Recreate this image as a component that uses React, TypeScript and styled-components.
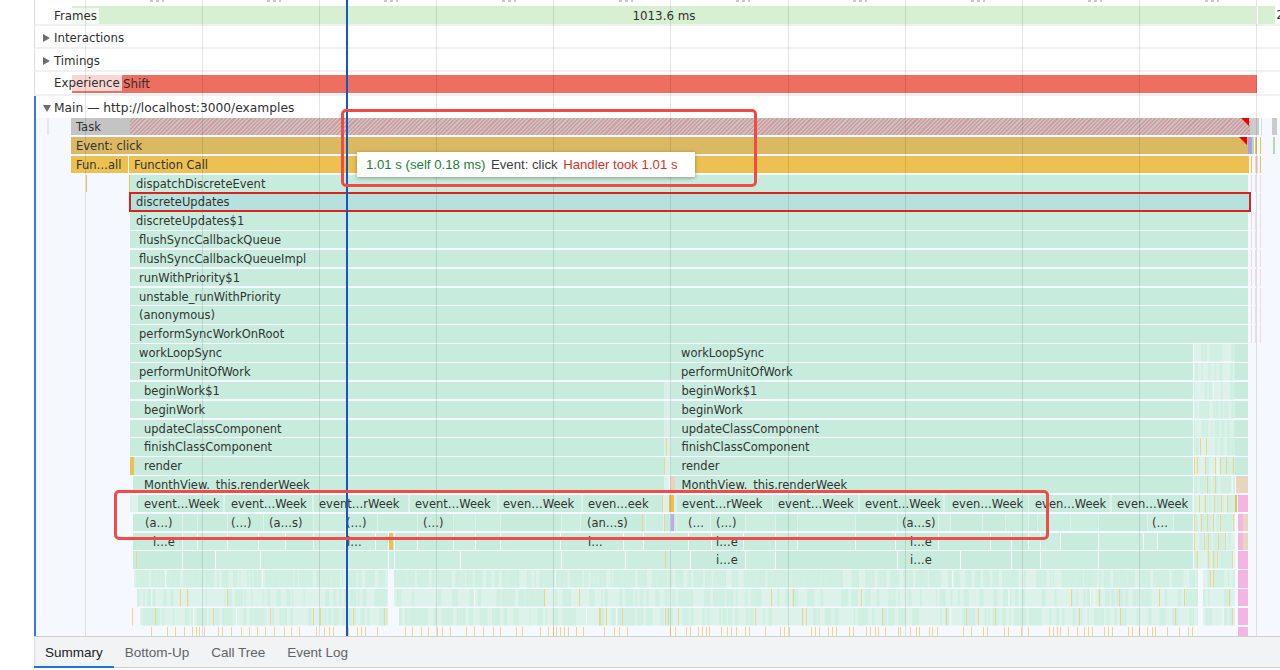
import styled, { createGlobalStyle } from 'styled-components'

const ORIGIN = 34
const ROW_PITCH = 18.85

const GlobalStyle = createGlobalStyle`
  html, body {
    margin: 0;
    padding: 0;
    background: #fff;
    overflow: hidden;
  }
`

const Page = styled.div`
  position: relative;
  width: 1280px;
  height: 670px;
  overflow: hidden;
  padding-left: ${ORIGIN}px;
  box-sizing: border-box;
  background: #fff;
  font-family: 'DejaVu Sans', sans-serif;
  font-size: 11.5px;
  color: #303030;
`

const Ruler = styled.div`
  height: 5px;
  box-sizing: border-box;
  border-left: 1px solid #ddd;
  padding: 0 61px 0 115px;
  display: flex;
  justify-content: space-between;
`

const RulerMark = styled.span`
  width: 14px;
  height: 2px;
  background: repeating-linear-gradient(90deg, #c9c9c9 0 3px, transparent 3px 6px);
`

const Track = styled.div<{ $height?: number }>`
  position: relative;
  height: ${(p) => p.$height ?? 23}px;
  box-sizing: border-box;
  border-left: 1px solid #ddd;
  border-bottom: 2px solid #f1f1f1;
  padding: 3px 0 0 19px;
  display: flex;
  align-items: center;
`

const BarTrack = styled(Track)`
  padding: 1px 0 0 37px;
  align-items: flex-start;
  gap: 2px;
`

const Caret = styled.span<{ $open?: boolean }>`
  position: absolute;
  left: 8px;
  top: 50%;
  margin-top: ${(p) => (p.$open ? -2 : -3)}px;
  width: 0;
  height: 0;
  ${(p) =>
    p.$open
      ? `left: 7px;
         border-left: 4px solid transparent;
         border-right: 4px solid transparent;
         border-top: 7px solid #6e6e6e;`
      : `border-top: 4px solid transparent;
         border-bottom: 4px solid transparent;
         border-left: 7px solid #6e6e6e;`}
`

const TrackLabel = styled.span`
  font-size: 11.8px;
  line-height: 16px;
`

const VeiledLabel = styled(TrackLabel)`
  position: absolute;
  left: 19px;
  top: 3px;
  padding-right: 2px;
  background: rgba(255, 255, 255, 0.72);
`

const FramesBar = styled.div<{ $width: number }>`
  width: ${(p) => p.$width}px;
  height: 18px;
  background: #d8f0d2;
  display: flex;
  align-items: center;
  justify-content: center;
  font-size: 11.9px;
  padding-top: 1px;
  box-sizing: border-box;
`

const ShiftBar = styled.div`
  width: 1185px;
  height: 18px;
  margin-top: 2px;
  background: #ee6e60;
  line-height: 19px;
  padding-left: 51px;
  box-sizing: border-box;
  font-size: 11.8px;
`

const CutText = styled.span`
  position: absolute;
  right: -4px;
  top: 3px;
  font-size: 12px;
`

const MainGroup = styled.section`
  height: 540px;
  border-left: 2px solid #3b78d8;
  position: relative;
  &::before {
    content: '';
    position: absolute;
    left: 0;
    top: 0;
    width: 11px;
    height: 2px;
    background: #3b78d8;
  }
`

const MainHeader = styled.div`
  position: relative;
  height: 22px;
  padding: 4px 0 0 18px;
  box-sizing: border-box;
  font-size: 12.25px;
  line-height: 17px;
  background: #fff;
`

const Flame = styled.div`
  height: 518px;
  background: #f5f8fe;
  overflow: hidden;
`

const FlameRow = styled.div`
  position: relative;
  height: ${ROW_PITCH}px;
`

const Bar = styled.div<{ $tone: string }>`
  position: absolute;
  top: 0;
  height: 17.4px;
  background: ${(p) => p.$tone};
`

const HatchBar = styled.div`
  position: absolute;
  top: 0;
  left: 94px;
  width: 1120px;
  height: 17.4px;
  background: repeating-linear-gradient(
    -45deg,
    #d49a9d 0 1.5px,
    #c8c4c4 1.5px 3px
  );
`

const Corner = styled.span<{ $inset: number }>`
  position: absolute;
  top: 0;
  left: ${(p) => p.$inset}px;
  width: 0;
  height: 0;
  border-top: 8px solid #f00000;
  border-left: 8px solid transparent;
`

const BarLabel = styled.span`
  position: absolute;
  top: 1px;
  height: 17.4px;
  line-height: 17.4px;
  white-space: nowrap;
  color: #333;
`

const Texture = styled.svg`
  position: absolute;
  left: 0;
  top: 0;
  width: 1246px;
  height: 18px;
  display: block;
`

const GridOverlay = styled.div`
  position: absolute;
  left: 85px;
  top: 0;
  width: 1172px;
  height: 636px;
  display: flex;
  justify-content: space-between;
`

const GridLine = styled.div`
  width: 1px;
  background: rgba(0, 0, 0, 0.1);
`

const Playhead = styled.div`
  position: absolute;
  left: 346px;
  top: 0;
  width: 2px;
  height: 636px;
  background: #1a56b8;
`

const SelectedOutline = styled.div`
  position: absolute;
  left: 129px;
  top: 192px;
  width: 1122px;
  height: 20px;
  box-sizing: border-box;
  border: 2px solid #d9231e;
`

const Callout = styled.div`
  position: absolute;
  box-sizing: border-box;
  border: 3px solid #f44a45;
  border-radius: 5px;
`

const TooltipCallout = styled(Callout)`
  left: 341px;
  top: 109px;
  width: 416px;
  height: 78px;
`

const WeekCallout = styled(Callout)`
  left: 114px;
  top: 490px;
  width: 935px;
  height: 50px;
`

const Tooltip = styled.div`
  position: absolute;
  left: 357px;
  top: 152px;
  width: 338px;
  height: 25px;
  box-sizing: border-box;
  padding-left: 9px;
  background: #fff;
  box-shadow: 0 1px 4px rgba(0, 0, 0, 0.35);
  display: flex;
  align-items: center;
  gap: 5.5px;
  font-family: 'Liberation Sans', Arial, sans-serif;
  font-size: 13.2px;
  white-space: nowrap;
`

const TipText = styled.span<{ $tone: string }>`
  color: ${(p) => p.$tone};
`

const TabBar = styled.nav`
  height: 32px;
  box-sizing: border-box;
  background: #f1f3f4;
  border-top: 1px solid #cfcfcf;
  border-bottom: 1px solid #cbcbcb;
  box-shadow: inset 1px 0 #ddd;
  display: flex;
  font-family: 'Liberation Sans', Arial, sans-serif;
  font-size: 13.5px;
`

const Tab = styled.div<{ $active?: boolean }>`
  height: 31px;
  padding: 0 11px;
  box-sizing: border-box;
  line-height: 31px;
  color: ${(p) => (p.$active ? '#202124' : '#5f6368')};
  border-bottom: 2px solid ${(p) => (p.$active ? '#1a73e8' : 'transparent')};
`

const GREEN = '#c7ecdd'
const GREEN_ALT = '#cbeee0'
const PALE = '#dcf2ea'
const GOLD = '#ecc152'
const TICK = '#f0d48a'
const PINK = '#f5b5e3'
const BEIGE = '#e8d5c0'

interface BarSpec {
  from: number
  to: number
  tone: string
}

interface RowSpec {
  bars: BarSpec[]
  labels: [number, string][]
  stripes?: { from: number; to: number; seed: number; density: number }[]
  ticks?: number[]
}

function rng(seed: number) {
  let s = seed
  return () => {
    s = (s * 16807) % 2147483647
    return s / 2147483647
  }
}

// bars with a thin pale gap at every break
function split(from: number, to: number, breaks: number[], seed = 7): BarSpec[] {
  const r = rng(seed)
  const out: BarSpec[] = []
  let start = from
  for (const b of [...breaks, to]) {
    out.push({ from: start, to: b, tone: r() > 0.6 ? GREEN_ALT : GREEN })
    start = b + 1
  }
  return out
}

const solid = (from: number, to: number, tone = GREEN): BarSpec => ({ from, to, tone })

const rightBits: BarSpec[] = [
  solid(1251, 1252, '#f3d6ee'),
  solid(1255, 1256, '#f3d6ee'),
  solid(1260, 1261, '#f3d6ee'),
]

const plainRow = (label: string, labelX = 139): RowSpec => ({
  bars: [solid(130, 1248), ...rightBits],
  labels: [[labelX, label]],
})

const sideStripes = (seed: number) => ({ from: 1194, to: 1235, seed, density: 0.55 })

const splitRow = (label: string, labelX: number, ticks: number[], seed: number, mid = '#cfeee3'): RowSpec => ({
  bars: [solid(130, 664), solid(664, 671, mid), solid(671, 1193), solid(1235, 1248)],
  labels: [
    [labelX, label],
    [labelX === 139 ? 681 : 681.5, label],
  ],
  stripes: [sideStripes(seed)],
  ticks,
})

const row21Breaks = [182, 197, 227, 263, 313, 345, 377, 417, 453, 475, 500, 561, 580, 645, 663, 676, 710, 745, 775, 797, 855, 897, 938, 950, 982, 1005, 1028, 1037, 1070, 1098, 1147, 1173]
const row22Breaks = [182, 197, 227, 258, 285, 313, 345, 375, 388, 394, 417, 453, 475, 500, 560, 623, 643, 670, 688, 711, 743, 775, 797, 855, 895, 938, 990, 1011, 1028, 1040, 1060, 1098, 1143, 1157]
const row23Breaks = [182, 215, 260, 388, 394, 460, 561, 625, 690, 745, 775, 897, 960, 1011, 1040, 1098]

const rows: RowSpec[] = [
  {
    bars: [
      solid(71, 130, '#c4c4c4'),
      solid(1250, 1259, '#cbcbcb'),
      solid(1261, 1262, '#dcdcdc'),
      solid(1272, 1277, '#cbcbcb'),
      solid(47, 49, '#e6e8ec'),
    ],
    labels: [[76, 'Task']],
  },
  {
    bars: [
      solid(71, 1248, '#dbb962'),
      solid(1248, 1252, '#a89fe8'),
      solid(1252, 1254, '#b9d8c4'),
      solid(1255, 1257, GOLD),
      solid(1260, 1261, GOLD),
      solid(1273, 1275, '#b9d8a8'),
    ],
    labels: [[76, 'Event: click']],
  },
  {
    bars: [
      solid(71, 128, GOLD),
      solid(129, 1249, GOLD),
      solid(1251, 1252, GOLD),
      solid(1255, 1258, '#f3d6c8'),
      solid(1260, 1261, GOLD),
    ],
    labels: [
      [76, 'Fun…all'],
      [134, 'Function Call'],
    ],
  },
  {
    bars: [solid(86, 87, GOLD), solid(128.5, 129.5, GOLD), solid(130, 1248), ...rightBits],
    labels: [[136, 'dispatchDiscreteEvent']],
  },
  { bars: [solid(130, 1250, '#b7e1dc'), solid(1260, 1261, '#f3d6ee')], labels: [[136, 'discreteUpdates']] },
  plainRow('discreteUpdates$1', 136),
  plainRow('flushSyncCallbackQueue'),
  plainRow('flushSyncCallbackQueueImpl'),
  plainRow('runWithPriority$1'),
  plainRow('unstable_runWithPriority'),
  plainRow('(anonymous)'),
  plainRow('performSyncWorkOnRoot'),
  splitRow('workLoopSync', 139, [], 11, GREEN),
  splitRow('performUnitOfWork', 139, [], 12, GREEN),
  splitRow('beginWork$1', 144, [], 13, '#d8f0e8'),
  splitRow('beginWork', 144, [], 14, '#d8f0e8'),
  splitRow('updateClassComponent', 144, [], 15, '#d8f0e8'),
  splitRow('finishClassComponent', 144, [666, 1200, 1206], 16, '#d8f0e8'),
  {
    ...splitRow('render', 144, [664, 1194, 1197, 1205, 1215, 1220, 1226, 1233], 17, '#d8f0e8'),
    bars: [
      solid(130, 134, GOLD),
      solid(134, 664),
      solid(664, 671, '#d8f0e8'),
      solid(671, 1193),
      solid(1235, 1248),
    ],
  },
  {
    ...splitRow('MonthView._this.renderWeek', 144, [1207, 1215], 18),
    bars: [
      solid(133, 664),
      solid(664, 669, '#dff3ec'),
      solid(669.5, 674.5, BEIGE),
      solid(674.5, 1193),
      solid(1236, 1248, BEIGE),
    ],
  },
  {
    bars: [
      solid(130, 1193, PALE),
      solid(138, 223),
      solid(225, 312),
      solid(313.5, 408),
      solid(410, 497),
      solid(498.5, 581),
      solid(583, 662),
      solid(669, 674, GOLD),
      solid(677, 772),
      solid(773, 858),
      solid(860, 943),
      solid(945, 1028),
      solid(1029, 1110),
      solid(1112, 1192),
      solid(1234, 1237, GOLD),
      solid(1238, 1248, PINK),
    ],
    labels: [
      [144, 'event…Week'],
      [231, 'event…Week'],
      [319, 'event…rWeek'],
      [415, 'event…Week'],
      [503, 'even…Week'],
      [588, 'even…eek'],
      [682, 'event…rWeek'],
      [778, 'event…Week'],
      [865, 'event…Week'],
      [952, 'even…Week'],
      [1035, 'even…Week'],
      [1117, 'even…Week'],
    ],
    stripes: [sideStripes(21)],
    ticks: [1199, 1205, 1214, 1221, 1227, 662],
  },
  {
    bars: [
      solid(133, 1193, PALE),
      ...split(133, 1193, row21Breaks, 31),
      solid(670.5, 673.5, '#c3a4ee'),
      solid(1238, 1243, PINK),
      solid(1243, 1248, BEIGE),
    ],
    labels: [
      [145, '(a…)'],
      [231, '(…)'],
      [269, '(a…s)'],
      [346, '(…)'],
      [423, '(…)'],
      [587, '(an…s)'],
      [688, '(…'],
      [716, '(…)'],
      [902, '(a…s)'],
      [1152, '(…'],
    ],
    stripes: [sideStripes(22)],
    ticks: [642, 664, 1194, 1201, 1207, 1213, 1220, 1233],
  },
  {
    bars: [
      ...split(133, 1193, row22Breaks, 37),
      solid(389, 393, GOLD),
      solid(1238, 1243, PINK),
      solid(1243, 1248, BEIGE),
    ],
    labels: [
      [153, 'i…e'],
      [347, 'i…'],
      [588, 'i…'],
      [716, 'i…e'],
      [910, 'i…e'],
    ],
    stripes: [sideStripes(23)],
    ticks: [1194, 1204, 1208, 1218, 1225],
  },
  {
    bars: [...split(133, 1193, row23Breaks, 41), solid(1238, 1248, PINK)],
    labels: [
      [716, 'i…e'],
      [910, 'i…e'],
    ],
    stripes: [sideStripes(24)],
    ticks: [136, 665, 1197, 1208, 1213, 1217, 1232],
  },
  {
    bars: [solid(1238, 1248, PINK)],
    labels: [],
    stripes: [
      { from: 134, to: 388, seed: 51, density: 0.75 },
      { from: 394, to: 1198, seed: 52, density: 0.75 },
      { from: 1203, to: 1235, seed: 53, density: 0.35 },
    ],
    ticks: [1210, 1213],
  },
  {
    bars: [solid(1238, 1248, PINK)],
    labels: [],
    stripes: [
      { from: 137, to: 388, seed: 61, density: 0.4 },
      { from: 394, to: 1198, seed: 62, density: 0.4 },
      { from: 1203, to: 1235, seed: 63, density: 0.3 },
    ],
    ticks: [180, 187, 227, 544, 579, 771, 793, 861, 1071, 1099, 1119, 1159, 1184, 1229],
  },
  {
    bars: [solid(1238, 1248, PINK)],
    labels: [],
    stripes: [
      { from: 140, to: 388, seed: 71, density: 0.45 },
      { from: 399, to: 1198, seed: 72, density: 0.45 },
      { from: 1203, to: 1235, seed: 73, density: 0.3 },
    ],
    ticks: [132, 155, 213, 270, 313, 320, 353, 384, 665, 668, 678, 599, 600, 606, 622, 755, 802, 806, 882, 946, 966, 978, 995, 1079, 1120, 1175, 1232],
  },
  {
    bars: [solid(1238, 1248, PINK)],
    labels: [],
    ticks: [
      151, 167, 175, 184, 192, 196, 199, 204, 218, 222, 231, 241, 249, 257, 265, 274, 284, 291, 299, 316, 324, 329, 333, 348, 357, 361,
      365, 377, 405, 412, 421, 428, 437, 442, 450, 466, 474, 483, 493, 500, 516, 522, 540, 548, 553, 556, 560, 564, 568, 576, 583, 604,
      614, 619, 627, 670, 675, 686, 690, 698, 702, 706, 709, 721, 727, 731, 736, 745, 749, 765, 780, 784, 789, 811, 815, 819, 828, 832,
      836, 849, 853, 866, 870, 875, 878, 885, 898, 900, 910, 916, 919, 929, 932, 937, 963, 971, 983, 987, 1004, 1008, 1021, 1028, 1049,
      1053, 1057, 1060, 1068, 1077, 1084, 1088, 1092, 1104, 1108, 1112, 1128, 1132, 1139, 1147, 1152, 1155, 1167, 1179, 1188, 1192,
    ],
  },
]

const gridLines = Array.from({ length: 11 }, (_, i) => i)
const rulerMarks = Array.from({ length: 10 }, (_, i) => i)

function Stripes({ row }: { row: RowSpec }) {
  const rects: { x: number; w: number; fill: string }[] = []
  for (const band of row.stripes ?? []) {
    const r = rng(band.seed * 991 + 13)
    rects.push({ x: band.from, w: band.to - band.from, fill: PALE })
    let x = band.from
    while (x < band.to) {
      const w = 1 + r() * 3
      const roll = r()
      if (roll < band.density) {
        rects.push({ x, w: Math.min(w, band.to - x), fill: '#d0efe3' })
      } else if (roll > 0.985) {
        rects.push({ x, w: 1, fill: '#f2faf7' })
      }
      x += w
    }
  }
  for (const t of row.ticks ?? []) {
    rects.push({ x: t, w: 1, fill: TICK })
  }
  if (rects.length === 0) return null
  return (
    <Texture viewBox={`${ORIGIN + 2} 0 1246 18`} preserveAspectRatio="none">
      {rects.map((s, i) => (
        <rect key={i} x={s.x} y={0} width={s.w} height={17.4} fill={s.fill} />
      ))}
    </Texture>
  )
}

const rowLeft = (x: number) => x - ORIGIN - 2

export default function App() {
  return (
    <Page>
      <GlobalStyle />
      <Ruler>
        {rulerMarks.map((i) => (
          <RulerMark key={i} />
        ))}
      </Ruler>
      <BarTrack $height={21}>
        <FramesBar $width={1184}>1013.6 ms</FramesBar>
        <FramesBar $width={17} />
        <VeiledLabel>Frames</VeiledLabel>
        <CutText>2</CutText>
      </BarTrack>
      <Track>
        <Caret />
        <TrackLabel>Interactions</TrackLabel>
      </Track>
      <Track>
        <Caret />
        <TrackLabel>Timings</TrackLabel>
      </Track>
      <BarTrack $height={24}>
        <ShiftBar>Shift</ShiftBar>
        <VeiledLabel>Experience</VeiledLabel>
      </BarTrack>
      <MainGroup>
        <MainHeader>
          <Caret $open />
          Main — http://localhost:3000/examples
        </MainHeader>
        <Flame>
          {rows.map((row, i) => (
            <FlameRow key={i}>
              {row.bars.map((b, j) => (
                <Bar key={j} $tone={b.tone} style={{ left: rowLeft(b.from), width: b.to - b.from }} />
              ))}
              {i === 0 && (
                <>
                  <HatchBar />
                  <Corner $inset={1205} />
                </>
              )}
              {i === 1 && <Corner $inset={1203} />}
              <Stripes row={row} />
              {row.labels.map(([x, text]) => (
                <BarLabel key={x} style={{ left: rowLeft(x) }}>
                  {text}
                </BarLabel>
              ))}
            </FlameRow>
          ))}
        </Flame>
      </MainGroup>
      <TabBar>
        <Tab $active>Summary</Tab>
        <Tab>Bottom-Up</Tab>
        <Tab>Call Tree</Tab>
        <Tab>Event Log</Tab>
      </TabBar>
      <GridOverlay>
        {gridLines.map((i) => (
          <GridLine key={i} />
        ))}
      </GridOverlay>
      <SelectedOutline />
      <Playhead />
      <Tooltip>
        <TipText $tone="#188038">1.01 s (self 0.18 ms)</TipText>
        <TipText $tone="#3c4043">Event: click</TipText>
        <TipText $tone="#d93025">Handler took 1.01 s</TipText>
      </Tooltip>
      <TooltipCallout />
      <WeekCallout />
    </Page>
  )
}
